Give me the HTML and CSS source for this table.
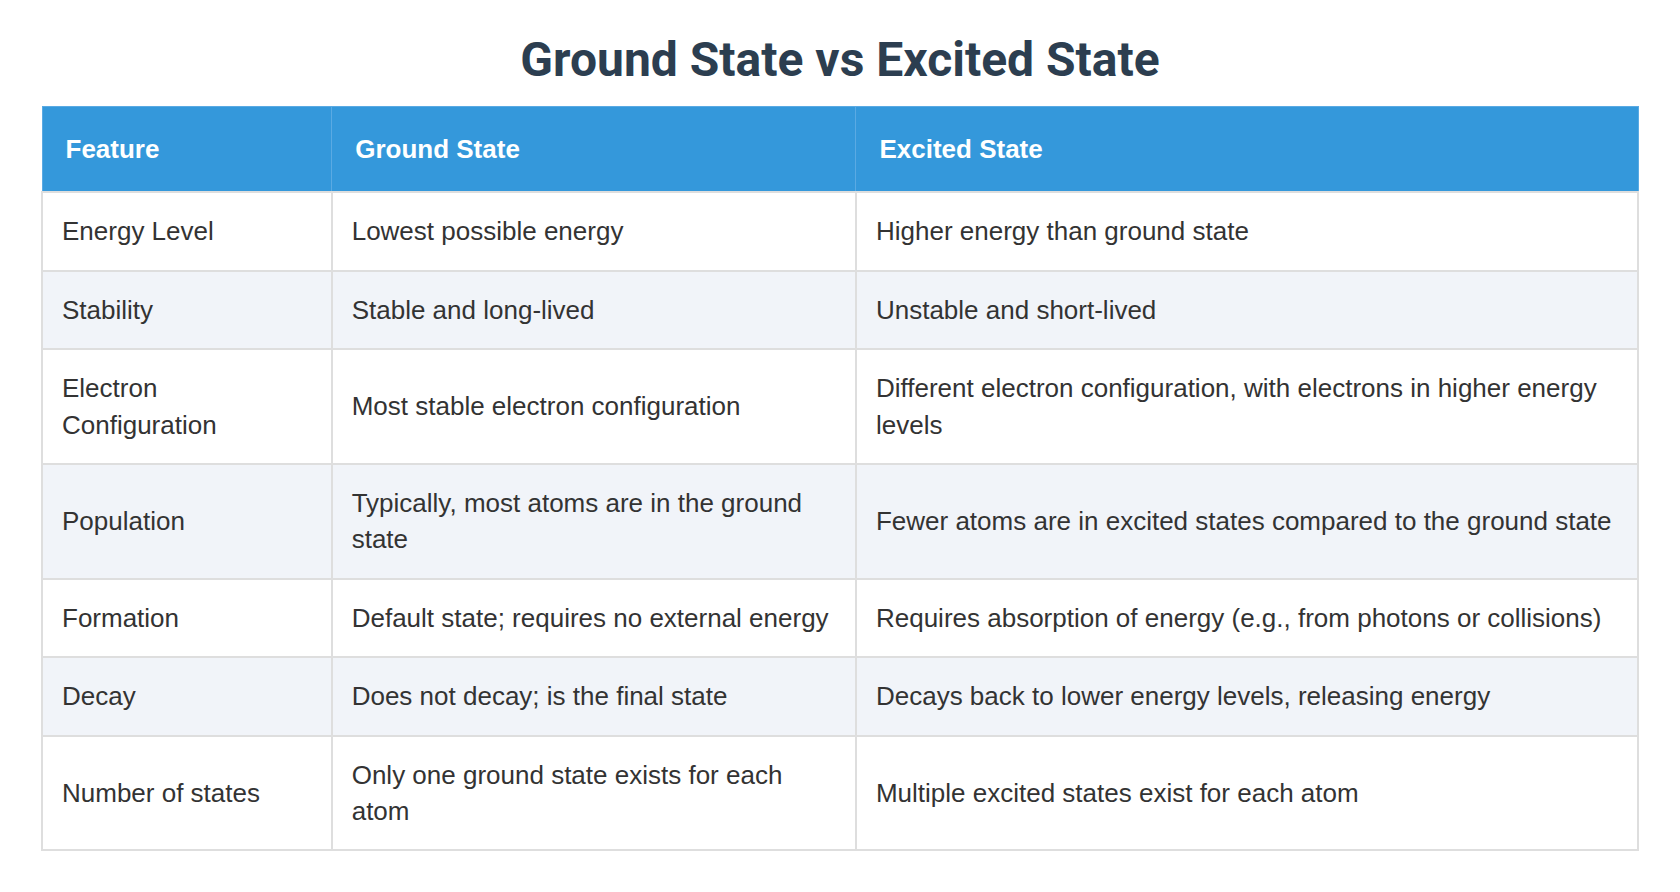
FILE: index.html
```html
<!DOCTYPE html>
<html lang="en">
<head>
<meta charset="utf-8">
<title>Ground State vs Excited State</title>
<link rel="stylesheet" href="styles.css">
</head>
<body>
<div class="page">
  <h1 class="title">Ground State vs Excited State</h1>
  <table class="compare">
    <colgroup>
      <col class="col-feature">
      <col class="col-ground">
      <col class="col-excited">
    </colgroup>
    <thead>
      <tr>
        <th>Feature</th>
        <th>Ground State</th>
        <th>Excited State</th>
      </tr>
    </thead>
    <tbody>
      <tr>
        <td>Energy Level</td>
        <td>Lowest possible energy</td>
        <td>Higher energy than ground state</td>
      </tr>
      <tr>
        <td>Stability</td>
        <td>Stable and long-lived</td>
        <td>Unstable and short-lived</td>
      </tr>
      <tr>
        <td>Electron Configuration</td>
        <td>Most stable electron configuration</td>
        <td>Different electron configuration, with electrons in higher energy levels</td>
      </tr>
      <tr>
        <td>Population</td>
        <td>Typically, most atoms are in the ground state</td>
        <td>Fewer atoms are in excited states compared to the ground state</td>
      </tr>
      <tr>
        <td>Formation</td>
        <td>Default state; requires no external energy</td>
        <td>Requires absorption of energy (e.g., from photons or collisions)</td>
      </tr>
      <tr>
        <td>Decay</td>
        <td>Does not decay; is the final state</td>
        <td>Decays back to lower energy levels, releasing energy</td>
      </tr>
      <tr>
        <td>Number of states</td>
        <td>Only one ground state exists for each atom</td>
        <td>Multiple excited states exist for each atom</td>
      </tr>
    </tbody>
  </table>
</div>
</body>
</html>
```
FILE: styles.css
```css
html, body {
  margin: 0;
  padding: 0;
  background: #ffffff;
}

.page {
  padding: 32px 41px 40px;
  font-family: "Liberation Sans", Arial, sans-serif;
  color: #333333;
}

.title {
  margin: 0 0 18px;
  font-family: Roboto, "Liberation Sans", sans-serif;
  font-weight: 700;
  font-size: 48px;
  line-height: 56px;
  color: #2c3e50;
  text-align: center;
}

.compare {
  width: 100%;
  border-collapse: collapse;
  font-size: 26px;
  line-height: 1.4;
}

.col-feature { width: 18.15%; }
.col-ground { width: 32.85%; }
.col-excited { width: 49%; }

.compare th {
  background: #3498db;
  color: #ffffff;
  font-weight: 700;
  text-align: left;
  padding: 24px 24px 24px 23px;
  border: 1px solid #5aaae3;
}

.compare td {
  padding: 20px 20px 20px 19px;
  border: 2px solid #dedede;
  text-align: left;
  vertical-align: middle;
}

.compare tbody tr:nth-child(even) {
  background: #f1f4f9;
}
```
